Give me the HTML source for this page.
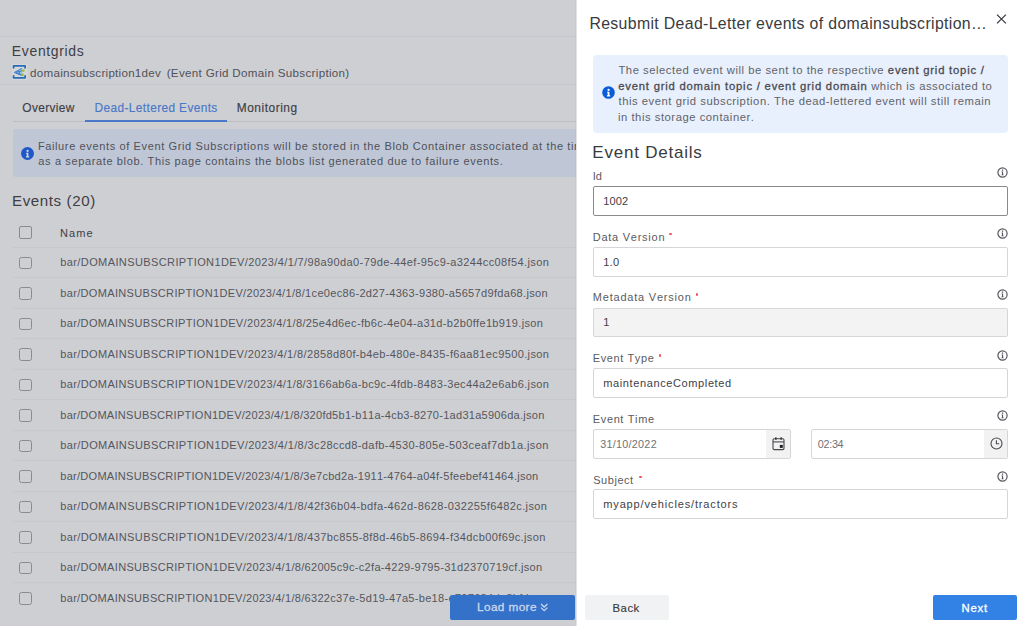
<!DOCTYPE html><html><head><meta charset="utf-8"><style>
html,body{margin:0;padding:0;}
body{width:1024px;height:626px;overflow:hidden;position:relative;background:#cecfd3;font-family:"Liberation Sans",sans-serif;font-kerning:none;}
.t{position:absolute;white-space:nowrap;}
.r{position:absolute;box-sizing:border-box;}
svg{position:absolute;}
</style></head><body>
<div class="r" style="left:0.00px;top:36.00px;width:576.00px;height:1.00px;background:#c6c6d1"></div>
<div class="r" style="left:0.00px;top:84.00px;width:576.00px;height:1.00px;background:#c6c6d1"></div>
<div class="t" style="left:11.86px;top:45.19px;font-size:13.953px;line-height:13.953px;color:#3e3e45;letter-spacing:0.669px;">Eventgrids</div>
<svg style="left:12px;top:64px" width="16" height="16" viewBox="0 0 16 16">
<rect x="-0.5" y="0" width="16" height="16" fill="#d6d7da"/>
<path d="M1.6 3.8 V1.9 H13.1 V3.8" fill="none" stroke="#2a6cb8" stroke-width="1.8" stroke-linecap="round" stroke-linejoin="round"/>
<path d="M1.6 11.9 V13.8 H13.1 V11.9" fill="none" stroke="#2a6cb8" stroke-width="1.8" stroke-linecap="round" stroke-linejoin="round"/>
<path d="M2.2 8.5 L10 4.2 L10.4 11.6 Z" fill="#9cbde0"/>
<path d="M2.2 8.5 L10 4.3 M2.2 8.5 L10 11.6 M4 8.3 L11 6.6 M4.5 9 L10.2 10.8 M6 6.8 L8 8.5 L6 10" fill="none" stroke="#3d7fc9" stroke-width="1"/>
<circle cx="11.4" cy="6.6" r="1.35" fill="#9cc23e"/><circle cx="10.6" cy="10.9" r="1.35" fill="#9cc23e"/>
</svg>
<div class="t" style="left:30.11px;top:66.65px;font-size:11.628px;line-height:11.628px;color:#505158;letter-spacing:0.263px;">domainsubscription1dev</div>
<div class="t" style="left:166.68px;top:66.65px;font-size:11.628px;line-height:11.628px;color:#505158;letter-spacing:0.311px;">(Event Grid Domain Subscription)</div>
<div class="t" style="left:22.34px;top:102.71px;font-size:11.919px;line-height:11.919px;color:#3e3e45;letter-spacing:0.352px;-webkit-text-stroke:0.15px currentColor">Overview</div>
<div class="t" style="left:94.62px;top:102.71px;font-size:11.919px;line-height:11.919px;color:#4a78c8;letter-spacing:0.361px;-webkit-text-stroke:0.15px currentColor">Dead-Lettered Events</div>
<div class="t" style="left:236.72px;top:102.71px;font-size:11.919px;line-height:11.919px;color:#3e3e45;letter-spacing:0.533px;-webkit-text-stroke:0.15px currentColor">Monitoring</div>
<div class="r" style="left:13.00px;top:120.50px;width:563.00px;height:1.00px;background:#bdbec4"></div>
<div class="r" style="left:84.60px;top:119.60px;width:142.40px;height:2.00px;background:#4a78c8"></div>
<div class="r" style="left:13.00px;top:129.00px;width:600.00px;height:48.00px;background:#bfc7d6;border-radius:3px"></div>
<svg style="left:21.1px;top:146.5px" width="13" height="13" viewBox="0 0 13 13"><circle cx="6.5" cy="6.5" r="6.5" fill="#1f58c6"/><circle cx="6.6" cy="3.9" r="1.15" fill="#cdd5e6"/><path d="M5.1 5.7 H7.4 V9.3 H8.2 V10.5 H4.9 V9.3 H5.7 V6.7 H5.1Z" fill="#cdd5e6"/></svg>
<div class="t" style="left:37.89px;top:140.85px;font-size:11.047px;line-height:11.047px;color:#4f5159;letter-spacing:0.616px;">Failure events of Event Grid Subscriptions will be stored in the Blob Container associated at the time of failure</div>
<div class="t" style="left:38.33px;top:156.35px;font-size:11.047px;line-height:11.047px;color:#4f5159;letter-spacing:0.616px;">as a separate blob. This page contains the blobs list generated due to failure events.</div>
<div class="t" style="left:11.96px;top:193.40px;font-size:15.116px;line-height:15.116px;color:#3e3e45;letter-spacing:0.598px;">Events (20)</div>
<div class="r" style="left:19.20px;top:226.30px;width:13.00px;height:13.00px;border:1.3px solid #8a8b90;border-radius:2px"></div>
<div class="t" style="left:59.99px;top:228.45px;font-size:11.047px;line-height:11.047px;color:#3e3e45;letter-spacing:1.11px;">Name</div>
<div class="r" style="left:13.00px;top:246.60px;width:563.00px;height:1.00px;background:#c7c8cd"></div>
<div class="r" style="left:19.10px;top:256.80px;width:12.70px;height:12.60px;border:1.3px solid #8a8b90;border-radius:2.5px"></div>
<div class="t" style="left:60.29px;top:257.35px;font-size:11.047px;line-height:11.047px;color:#55565c;letter-spacing:0.376px;">bar/DOMAINSUBSCRIPTION1DEV/2023/4/1/7/98a90da0-79de-44ef-95c9-a3244cc08f54.json</div>
<div class="r" style="left:13.00px;top:277.10px;width:563.00px;height:1.00px;background:#c7c8cd"></div>
<div class="r" style="left:19.10px;top:287.30px;width:12.70px;height:12.60px;border:1.3px solid #8a8b90;border-radius:2.5px"></div>
<div class="t" style="left:60.29px;top:287.85px;font-size:11.047px;line-height:11.047px;color:#55565c;letter-spacing:0.312px;">bar/DOMAINSUBSCRIPTION1DEV/2023/4/1/8/1ce0ec86-2d27-4363-9380-a5657d9fda68.json</div>
<div class="r" style="left:13.00px;top:307.60px;width:563.00px;height:1.00px;background:#c7c8cd"></div>
<div class="r" style="left:19.10px;top:317.80px;width:12.70px;height:12.60px;border:1.3px solid #8a8b90;border-radius:2.5px"></div>
<div class="t" style="left:60.29px;top:318.35px;font-size:11.047px;line-height:11.047px;color:#55565c;letter-spacing:0.33px;">bar/DOMAINSUBSCRIPTION1DEV/2023/4/1/8/25e4d6ec-fb6c-4e04-a31d-b2b0ffe1b919.json</div>
<div class="r" style="left:13.00px;top:338.10px;width:563.00px;height:1.00px;background:#c7c8cd"></div>
<div class="r" style="left:19.10px;top:348.30px;width:12.70px;height:12.60px;border:1.3px solid #8a8b90;border-radius:2.5px"></div>
<div class="t" style="left:60.29px;top:348.85px;font-size:11.047px;line-height:11.047px;color:#55565c;letter-spacing:0.36px;">bar/DOMAINSUBSCRIPTION1DEV/2023/4/1/8/2858d80f-b4eb-480e-8435-f6aa81ec9500.json</div>
<div class="r" style="left:13.00px;top:368.60px;width:563.00px;height:1.00px;background:#c7c8cd"></div>
<div class="r" style="left:19.10px;top:378.80px;width:12.70px;height:12.60px;border:1.3px solid #8a8b90;border-radius:2.5px"></div>
<div class="t" style="left:60.29px;top:379.35px;font-size:11.047px;line-height:11.047px;color:#55565c;letter-spacing:0.336px;">bar/DOMAINSUBSCRIPTION1DEV/2023/4/1/8/3166ab6a-bc9c-4fdb-8483-3ec44a2e6ab6.json</div>
<div class="r" style="left:13.00px;top:399.10px;width:563.00px;height:1.00px;background:#c7c8cd"></div>
<div class="r" style="left:19.10px;top:409.30px;width:12.70px;height:12.60px;border:1.3px solid #8a8b90;border-radius:2.5px"></div>
<div class="t" style="left:60.29px;top:409.85px;font-size:11.047px;line-height:11.047px;color:#55565c;letter-spacing:0.262px;">bar/DOMAINSUBSCRIPTION1DEV/2023/4/1/8/320fd5b1-b11a-4cb3-8270-1ad31a5906da.json</div>
<div class="r" style="left:13.00px;top:429.60px;width:563.00px;height:1.00px;background:#c7c8cd"></div>
<div class="r" style="left:19.10px;top:439.80px;width:12.70px;height:12.60px;border:1.3px solid #8a8b90;border-radius:2.5px"></div>
<div class="t" style="left:60.29px;top:440.35px;font-size:11.047px;line-height:11.047px;color:#55565c;letter-spacing:0.377px;">bar/DOMAINSUBSCRIPTION1DEV/2023/4/1/8/3c28ccd8-dafb-4530-805e-503ceaf7db1a.json</div>
<div class="r" style="left:13.00px;top:460.10px;width:563.00px;height:1.00px;background:#c7c8cd"></div>
<div class="r" style="left:19.10px;top:470.30px;width:12.70px;height:12.60px;border:1.3px solid #8a8b90;border-radius:2.5px"></div>
<div class="t" style="left:60.29px;top:470.85px;font-size:11.047px;line-height:11.047px;color:#55565c;letter-spacing:0.263px;">bar/DOMAINSUBSCRIPTION1DEV/2023/4/1/8/3e7cbd2a-1911-4764-a04f-5feebef41464.json</div>
<div class="r" style="left:13.00px;top:490.60px;width:563.00px;height:1.00px;background:#c7c8cd"></div>
<div class="r" style="left:19.10px;top:500.80px;width:12.70px;height:12.60px;border:1.3px solid #8a8b90;border-radius:2.5px"></div>
<div class="t" style="left:60.29px;top:501.35px;font-size:11.047px;line-height:11.047px;color:#55565c;letter-spacing:0.375px;">bar/DOMAINSUBSCRIPTION1DEV/2023/4/1/8/42f36b04-bdfa-462d-8628-032255f6482c.json</div>
<div class="r" style="left:13.00px;top:521.10px;width:563.00px;height:1.00px;background:#c7c8cd"></div>
<div class="r" style="left:19.10px;top:531.30px;width:12.70px;height:12.60px;border:1.3px solid #8a8b90;border-radius:2.5px"></div>
<div class="t" style="left:60.29px;top:531.85px;font-size:11.047px;line-height:11.047px;color:#55565c;letter-spacing:0.37px;">bar/DOMAINSUBSCRIPTION1DEV/2023/4/1/8/437bc855-8f8d-46b5-8694-f34dcb00f69c.json</div>
<div class="r" style="left:13.00px;top:551.60px;width:563.00px;height:1.00px;background:#c7c8cd"></div>
<div class="r" style="left:19.10px;top:561.80px;width:12.70px;height:12.60px;border:1.3px solid #8a8b90;border-radius:2.5px"></div>
<div class="t" style="left:60.29px;top:562.35px;font-size:11.047px;line-height:11.047px;color:#55565c;letter-spacing:0.298px;">bar/DOMAINSUBSCRIPTION1DEV/2023/4/1/8/62005c9c-c2fa-4229-9795-31d2370719cf.json</div>
<div class="r" style="left:13.00px;top:582.10px;width:563.00px;height:1.00px;background:#c7c8cd"></div>
<div class="r" style="left:19.10px;top:592.30px;width:12.70px;height:12.60px;border:1.3px solid #8a8b90;border-radius:2.5px"></div>
<div class="t" style="left:60.29px;top:592.85px;font-size:11.047px;line-height:11.047px;color:#55565c;letter-spacing:0.297px;">bar/DOMAINSUBSCRIPTION1DEV/2023/4/1/8/6322c37e-5d19-47a5-be18-e797684da8bf.json</div>
<div class="r" style="left:449.60px;top:594.80px;width:125.40px;height:25.50px;background:#3471c9;border-radius:2px"></div>
<div class="t" style="left:477.03px;top:601.13px;font-size:11.773px;line-height:11.773px;color:#cdd7ec;letter-spacing:0.4px;-webkit-text-stroke:0.3px #cdd7ec">Load more</div>
<svg style="left:539.8px;top:603px" width="9" height="9" viewBox="0 0 9 9"><path d="M1 1 L4.2 4 L7.4 1 M1 4.6 L4.2 7.6 L7.4 4.6" fill="none" stroke="#cdd7ec" stroke-width="1.3"/></svg>
<div class="r" style="left:575.00px;top:0.00px;width:1.00px;height:626.00px;background:rgba(0,0,0,0.025)"></div>
<div class="r" style="left:576.00px;top:0.00px;width:448.00px;height:626.00px;background:#fff"></div>
<div class="r" style="left:576.00px;top:0.00px;width:1.00px;height:626.00px;background:#e2e3e6"></div>
<div class="t" style="left:589.40px;top:15.59px;font-size:15.843px;line-height:15.843px;color:#3a3b40;letter-spacing:0.354px;">Resubmit Dead-Letter events of domainsubscription…</div>
<svg style="left:996px;top:13px" width="12" height="12" viewBox="0 0 12 12"><path d="M1 1.6 L9.9 10.4 M9.9 1.6 L1 10.4" stroke="#3a3b40" stroke-width="1.3"/></svg>
<div class="r" style="left:593.00px;top:55.00px;width:415.00px;height:77.60px;background:#e8f0fd;border-radius:4px"></div>
<svg style="left:601.6px;top:86.4px" width="13" height="13" viewBox="0 0 13 13"><circle cx="6.5" cy="6.5" r="6.3" fill="#0b5cd7"/><circle cx="6.6" cy="3.9" r="1.15" fill="#fff"/><path d="M5.1 5.7 H7.4 V9.3 H8.2 V10.5 H4.9 V9.3 H5.7 V6.7 H5.1Z" fill="#fff"/></svg>
<div class="t" style="left:618.45px;top:65.16px;font-size:11.265px;line-height:11.265px;color:#626368;letter-spacing:0.535px;">The selected event will be sent to the respective <span style="color:#4a4b50;-webkit-text-stroke:0.3px #4a4b50;letter-spacing:0.795px">event grid topic /</span></div>
<div class="t" style="left:618.22px;top:80.56px;font-size:11.265px;line-height:11.265px;color:#626368;letter-spacing:0.535px;"><span style="color:#4a4b50;-webkit-text-stroke:0.3px #4a4b50;letter-spacing:0.795px">event grid domain topic / event grid domain</span> which is associated to</div>
<div class="t" style="left:618.53px;top:96.06px;font-size:11.265px;line-height:11.265px;color:#626368;letter-spacing:0.535px;">this event grid subscription. The dead-lettered event will still remain</div>
<div class="t" style="left:617.95px;top:111.86px;font-size:11.265px;line-height:11.265px;color:#626368;letter-spacing:0.535px;">in this storage container.</div>
<div class="t" style="left:592.30px;top:143.90px;font-size:17.006px;line-height:17.006px;color:#3a3b40;letter-spacing:0.776px;">Event Details</div>
<div class="t" style="left:592.68px;top:170.75px;font-size:11.047px;line-height:11.047px;color:#5a5b60;">Id</div>
<svg style="left:996.90px;top:167.30px" width="11" height="11" viewBox="0 0 11 11"><circle cx="5.5" cy="5.5" r="4.6" fill="none" stroke="#56575c" stroke-width="1.2"/><path d="M4.5 4.5 H6.1 V7.6 H6.7 V8.3 H4.4 V7.6 H5 V5.2 H4.5Z" fill="#56575c"/><rect x="4.9" y="2.5" width="1.3" height="1.3" fill="#56575c"/></svg>
<div class="r" style="left:593.00px;top:186.30px;width:415.00px;height:29.80px;background:#fff;border:1px solid #8b8b8e;border-radius:2px"></div>
<div class="t" style="left:603.16px;top:196.05px;font-size:11.047px;line-height:11.047px;color:#404146;letter-spacing:0.141px;">1002</div>
<div class="t" style="left:592.80px;top:231.56px;font-size:10.974px;line-height:10.974px;color:#5a5b60;letter-spacing:0.753px;">Data Version</div>
<div class="r" style="left:669.35px;top:232.60px;width:2.70px;height:2.70px;background:#f4525b;border-radius:50%"></div>
<svg style="left:996.90px;top:228.06px" width="11" height="11" viewBox="0 0 11 11"><circle cx="5.5" cy="5.5" r="4.6" fill="none" stroke="#56575c" stroke-width="1.2"/><path d="M4.5 4.5 H6.1 V7.6 H6.7 V8.3 H4.4 V7.6 H5 V5.2 H4.5Z" fill="#56575c"/><rect x="4.9" y="2.5" width="1.3" height="1.3" fill="#56575c"/></svg>
<div class="r" style="left:593.00px;top:246.90px;width:415.00px;height:29.80px;background:#fff;border:1px solid #d6d6d8;border-radius:2px"></div>
<div class="t" style="left:603.16px;top:256.65px;font-size:11.047px;line-height:11.047px;color:#404146;letter-spacing:0.3px;">1.0</div>
<div class="t" style="left:592.80px;top:292.31px;font-size:10.974px;line-height:10.974px;color:#5a5b60;letter-spacing:0.8px;">Metadata Version</div>
<div class="r" style="left:695.65px;top:293.35px;width:2.70px;height:2.70px;background:#f4525b;border-radius:50%"></div>
<svg style="left:996.90px;top:288.82px" width="11" height="11" viewBox="0 0 11 11"><circle cx="5.5" cy="5.5" r="4.6" fill="none" stroke="#56575c" stroke-width="1.2"/><path d="M4.5 4.5 H6.1 V7.6 H6.7 V8.3 H4.4 V7.6 H5 V5.2 H4.5Z" fill="#56575c"/><rect x="4.9" y="2.5" width="1.3" height="1.3" fill="#56575c"/></svg>
<div class="r" style="left:593.00px;top:307.50px;width:415.00px;height:29.80px;background:#f3f3f4;border:1px solid #d6d6d8;border-radius:2px"></div>
<div class="t" style="left:603.16px;top:317.25px;font-size:11.047px;line-height:11.047px;color:#404146;letter-spacing:0.3px;">1</div>
<div class="t" style="left:592.80px;top:353.06px;font-size:10.974px;line-height:10.974px;color:#5a5b60;letter-spacing:0.609px;">Event Type</div>
<div class="r" style="left:658.65px;top:354.10px;width:2.70px;height:2.70px;background:#f4525b;border-radius:50%"></div>
<svg style="left:996.90px;top:349.58px" width="11" height="11" viewBox="0 0 11 11"><circle cx="5.5" cy="5.5" r="4.6" fill="none" stroke="#56575c" stroke-width="1.2"/><path d="M4.5 4.5 H6.1 V7.6 H6.7 V8.3 H4.4 V7.6 H5 V5.2 H4.5Z" fill="#56575c"/><rect x="4.9" y="2.5" width="1.3" height="1.3" fill="#56575c"/></svg>
<div class="r" style="left:593.00px;top:368.10px;width:415.00px;height:29.80px;background:#fff;border:1px solid #d6d6d8;border-radius:2px"></div>
<div class="t" style="left:603.27px;top:377.85px;font-size:11.047px;line-height:11.047px;color:#404146;letter-spacing:0.598px;">maintenanceCompleted</div>
<div class="t" style="left:592.80px;top:413.81px;font-size:10.974px;line-height:10.974px;color:#5a5b60;letter-spacing:0.644px;">Event Time</div>
<svg style="left:996.90px;top:410.34px" width="11" height="11" viewBox="0 0 11 11"><circle cx="5.5" cy="5.5" r="4.6" fill="none" stroke="#56575c" stroke-width="1.2"/><path d="M4.5 4.5 H6.1 V7.6 H6.7 V8.3 H4.4 V7.6 H5 V5.2 H4.5Z" fill="#56575c"/><rect x="4.9" y="2.5" width="1.3" height="1.3" fill="#56575c"/></svg>
<div class="r" style="left:593.00px;top:428.90px;width:197.60px;height:29.80px;background:#fff;border:1px solid #d6d6d8;border-radius:2px"></div>
<div class="r" style="left:766.00px;top:429.90px;width:23.60px;height:27.80px;background:#f2f2f3"></div>
<div class="t" style="left:600.29px;top:439.49px;font-size:10.756px;line-height:10.756px;color:#717176;letter-spacing:0.28px;">31/10/2022</div>
<div class="r" style="left:810.50px;top:428.80px;width:197.50px;height:29.80px;background:#fff;border:1px solid #d6d6d8;border-radius:2px"></div>
<div class="r" style="left:984.00px;top:429.80px;width:23.00px;height:27.80px;background:#f2f2f3"></div>
<div class="t" style="left:817.78px;top:439.49px;font-size:10.756px;line-height:10.756px;color:#717176;letter-spacing:-0.27px;">02:34</div>
<svg style="left:772px;top:437.00px" width="13" height="14" viewBox="0 0 13 14"><rect x="1" y="1.7" width="11" height="10.9" rx="1.3" fill="none" stroke="#47474c" stroke-width="1.1"/><path d="M1 4.9 H12" stroke="#47474c" stroke-width="1.1"/><rect x="3.1" y="0.2" width="1.5" height="2.6" rx="0.5" fill="#303035"/><rect x="8.4" y="0.2" width="1.5" height="2.6" rx="0.5" fill="#303035"/><rect x="7.8" y="7.9" width="3" height="3" fill="#202024"/></svg>
<svg style="left:989.5px;top:437.20px" width="13" height="13" viewBox="0 0 13 13"><circle cx="6.5" cy="6.5" r="5.5" fill="none" stroke="#4a4a50" stroke-width="1.1"/><path d="M6.4 3.3 V6.8 H9.2" fill="none" stroke="#4a4a50" stroke-width="1.1"/></svg>
<div class="t" style="left:593.20px;top:474.56px;font-size:10.974px;line-height:10.974px;color:#5a5b60;letter-spacing:0.562px;">Subject</div>
<div class="r" style="left:639.25px;top:475.60px;width:2.70px;height:2.70px;background:#f4525b;border-radius:50%"></div>
<svg style="left:996.90px;top:471.10px" width="11" height="11" viewBox="0 0 11 11"><circle cx="5.5" cy="5.5" r="4.6" fill="none" stroke="#56575c" stroke-width="1.2"/><path d="M4.5 4.5 H6.1 V7.6 H6.7 V8.3 H4.4 V7.6 H5 V5.2 H4.5Z" fill="#56575c"/><rect x="4.9" y="2.5" width="1.3" height="1.3" fill="#56575c"/></svg>
<div class="r" style="left:593.00px;top:489.30px;width:415.00px;height:29.80px;background:#fff;border:1px solid #d6d6d8;border-radius:2px"></div>
<div class="t" style="left:603.27px;top:499.05px;font-size:11.047px;line-height:11.047px;color:#404146;letter-spacing:0.836px;">myapp/vehicles/tractors</div>
<div class="r" style="left:585.00px;top:594.70px;width:83.50px;height:25.60px;background:#f1f2f4;border-radius:2px"></div>
<div class="t" style="left:612.47px;top:602.70px;font-size:11.337px;line-height:11.337px;color:#3a3b40;letter-spacing:0.536px;-webkit-text-stroke:0.15px #3a3b40">Back</div>
<div class="r" style="left:933.40px;top:594.80px;width:83.20px;height:25.50px;background:#3282e6;border-radius:2px"></div>
<div class="t" style="left:961.47px;top:602.70px;font-size:11.337px;line-height:11.337px;color:#fff;letter-spacing:0.767px;-webkit-text-stroke:0.3px #fff">Next</div>
</body></html>
